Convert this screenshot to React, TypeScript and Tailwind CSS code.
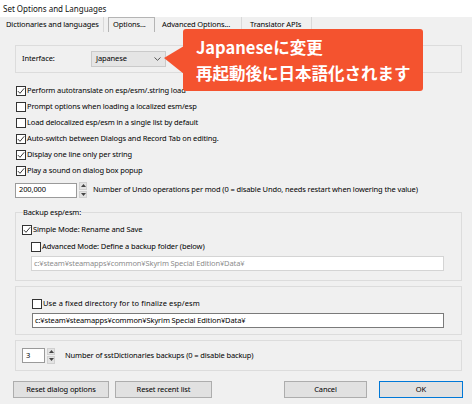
import React from 'react';

const ui = { fontFamily: '"Noto Sans", "Open Sans", sans-serif' };
const jp = { fontFamily: '"Noto Sans CJK JP", "Noto Sans", sans-serif' };

const path = 'c:¥steam¥steamapps¥common¥Skyrim Special Edition¥Data¥';

const Box: React.FC<{ checked?: boolean }> = ({ checked }) => (
  <span className="w-[10px] h-[10px] border border-[#333] bg-white flex items-center justify-center shrink-0">
    {checked && (
      <svg width="8" height="8" viewBox="0 0 8 8">
        <path d="M0.9 4.1 L3 6.3 L7.2 1.3" fill="none" stroke="#222" strokeWidth="0.9" />
      </svg>
    )}
  </span>
);

const Check: React.FC<{ checked?: boolean; label: string; className?: string }> = ({ checked, label, className }) => (
  <div className={`flex items-center gap-[1px] h-[16px] ${className ?? ''}`}>
    <Box checked={checked} />
    <span>{label}</span>
  </div>
);

const Spin: React.FC<{ value: string; width: string }> = ({ value, width }) => (
  <div className="flex items-center gap-[2px]">
    <div className={`${width} h-[15px] bg-white border border-[#9a9a9a] flex items-center pl-[3px]`}>{value}</div>
    <div className="w-[8px] h-[16px] flex flex-col gap-[1px]">
      <div className="flex-1 bg-[#e3e3e3] border border-[#d0d0d0] flex items-center justify-center">
        <svg width="5" height="3" viewBox="0 0 5 3"><path d="M0 3 L2.5 0 L5 3Z" fill="#444" /></svg>
      </div>
      <div className="flex-1 bg-[#e3e3e3] border border-[#d0d0d0] flex items-center justify-center">
        <svg width="5" height="3" viewBox="0 0 5 3"><path d="M0 0 L2.5 3 L5 0Z" fill="#444" /></svg>
      </div>
    </div>
  </div>
);

const Btn: React.FC<{ label: string; w: string; ok?: boolean }> = ({ label, w, ok }) => (
  <div
    className={`${w} h-[17px] bg-[#e1e1e1] border flex items-center justify-center ${
      ok ? 'border-[#0078d7]' : 'border-[#adadad]'
    }`}
  >
    {label}
  </div>
);

export default function App() {
  return (
    <div
      className="w-[474px] h-[407px] bg-white text-[7.5px] tracking-[-0.12px] text-black leading-none overflow-hidden relative"
      style={ui}
    >
      <div className="h-[17px] pl-[3px] flex items-center text-[8px] tracking-normal text-[#111]">Set Options and Languages</div>

      <div className="w-[472px] h-[387px] bg-[#f0f0f0] flex flex-col">
        {/* tabs */}
        <div className="flex h-[15px] items-stretch whitespace-nowrap">
          <div className="w-[104px] pl-[6px] flex items-center border-r border-[#d9d9d9]">Dictionaries and languages</div>
          <div className="ml-[4px] w-[47px] pl-[4px] flex items-center border-l border-r border-t border-[#b4b4b4]">Options...</div>
          <div className="w-[87px] pl-[7px] flex items-center border-r border-[#d9d9d9]">Advanced Options...</div>
          <div className="w-[70px] pl-[8px] flex items-center border-r border-[#d9d9d9]">Translator APIs</div>
        </div>

        <div className="pl-[15px] pr-[10px] flex flex-col whitespace-nowrap">
          {/* interface language */}
          <div className="mt-[13px] h-[28px] border border-[#dcdcdc] flex items-center pl-[6px]">
            <span className="w-[69px]">Interface:</span>
            <div className="w-[75px] h-[16px] bg-[#e5e5e5] border border-[#cacaca] flex items-center justify-between pl-[4px] pr-[4px]">
              <span>Japanese</span>
              <svg width="7" height="4" viewBox="0 0 7 4"><path d="M0.5 0.5 L3.5 3.3 L6.5 0.5" fill="none" stroke="#555" /></svg>
            </div>
          </div>

          {/* general options */}
          <div className="mt-[10px] pl-[1px] flex flex-col">
            <Check checked label="Perform autotranslate on esp/esm/.string load" />
            <Check label="Prompt options when loading a localized esm/esp" />
            <Check label="Load delocalized esp/esm in a single list by default" />
            <Check checked label="Auto-switch between Dialogs and Record Tab on editing." />
            <Check checked label="Display one line only per string" />
            <Check checked label="Play a sound on dialog box popup" />
          </div>

          <div className="mt-[3px] flex items-center gap-[6px]">
            <Spin value="200,000" width="w-[62px]" />
            <span>Number of Undo operations per mod (0 = disable Undo, needs restart when lowering the value)</span>
          </div>

          {/* backup */}
          <fieldset className="mt-[9px] border border-[#dcdcdc] pl-[6px] pr-[17px] pb-[9px]">
            <legend className="ml-[1px] px-[0px] leading-[10px]">Backup esp/esm:</legend>
            <Check checked label="Simple Mode: Rename and Save" className="mt-[5px]" />
            <Check label="Advanced Mode: Define a backup folder (below)" className="ml-[9px] mt-[1px]" />
            <div className="ml-[9px] mt-[1px] h-[15px] bg-white border border-[#d4d4d4] text-[#8c8c8c] flex items-center pl-[2px]">{path}</div>
          </fieldset>

          <div className="mt-[5px] border border-[#dcdcdc] pl-[16px] pr-[17px] pb-[6px] flex flex-col">
            <Check label="Use a fixed directory for to finalize esp/esm" className="mt-[9px] tracking-[0.1px]" />
            <div className="mt-[1px] h-[15px] bg-white border border-[#7a7a7a] flex items-center pl-[2px]">{path}</div>
          </div>

          <div className="mt-[5px] h-[31px] border border-[#dcdcdc] pl-[6px] flex items-center gap-[10px]">
            <Spin value="3" width="w-[23px]" />
            <span>Number of sstDictionaries backups (0 = disable backup)</span>
          </div>

          <div className="mt-[10px] flex items-center -ml-[2px] -mr-[1px]">
            <Btn label="Reset dialog options" w="w-[96px]" />
            <div className="w-[6px]" />
            <Btn label="Reset recent list" w="w-[97px]" />
            <div className="flex-1" />
            <Btn label="Cancel" w="w-[83px]" />
            <div className="w-[12px]" />
            <Btn label="OK" w="w-[84px]" ok />
          </div>
        </div>
      </div>

      {/* callout over the dropdown */}
      <svg width="20" height="28" viewBox="0 0 20 28" className="absolute left-[164px] top-[46px]">
        <path d="M20 0 L0 12 L20 28Z" fill="#f4532f" />
      </svg>
      <div
        className="absolute left-[183px] top-[29px] w-[240px] h-[62px] bg-[#f4532f] rounded-[3px] text-white font-bold text-[16.5px] tracking-normal leading-[26px] pl-[13px] pt-[5px] whitespace-nowrap"
        style={jp}
      >
        <div>Japaneseに変更</div>
        <div>再起動後に日本語化されます</div>
      </div>
    </div>
  );
}
